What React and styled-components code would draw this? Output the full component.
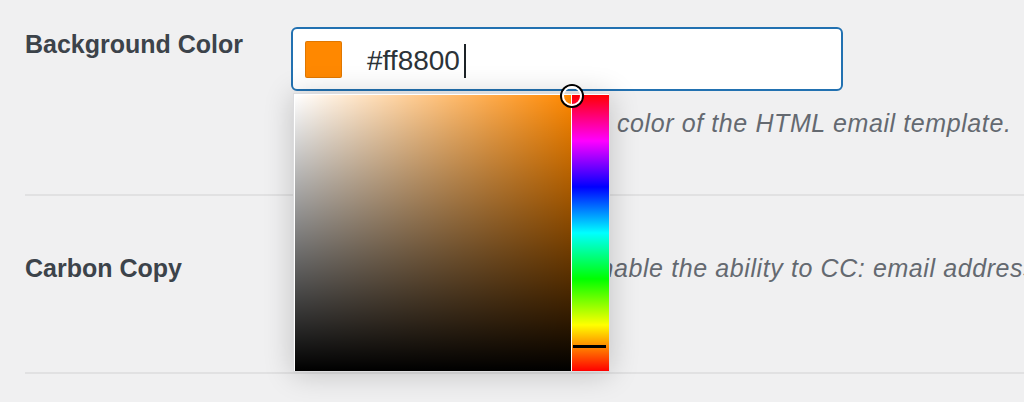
import React from 'react';
import styled, { createGlobalStyle } from 'styled-components';

const GlobalStyle = createGlobalStyle`
  body {
    margin: 0;
    background: #f0f0f1;
    font-family: "Liberation Sans", Arial, sans-serif;
    overflow: hidden;
  }
`;

const Page = styled.div`
  width: 1024px;
  height: 402px;
  padding-left: 25px;
  box-sizing: border-box;
  overflow: hidden;
`;

const Row = styled.div`
  display: flex;
  align-items: ${p => p.inline ? 'baseline' : 'flex-start'};
  height: ${p => p.h}px;
  padding-top: ${p => p.pt}px;
  box-sizing: border-box;
  border-bottom: 2px solid #e1e1e2;
`;

const Label = styled.div`
  width: 266px;
  flex-shrink: 0;
  margin-top: ${p => p.mt || 0}px;
  font-size: 25px;
  line-height: 30px;
  font-weight: 700;
  color: #3c434a;
`;

const Field = styled.div`
  position: relative;
  flex: 1;
  min-width: 0;
  white-space: nowrap;
`;

const ColorInput = styled.div`
  display: flex;
  align-items: center;
  width: 552px;
  height: 64px;
  padding-left: 12px;
  box-sizing: border-box;
  border: 2px solid #2271b1;
  border-radius: 6px;
  background: #fff;
`;

const Swatch = styled.span`
  width: 37px;
  height: 37px;
  box-sizing: border-box;
  border: 1px solid rgba(0, 0, 0, 0.12);
  border-radius: 2px;
  background: ${p => p.color};
`;

const Value = styled.span`
  margin-left: 25px;
  padding-top: 4px;
  font-size: 28px;
  line-height: 32px;
  color: #2c3338;
`;

const Caret = styled.span`
  display: inline-block;
  width: 2px;
  height: 34px;
  margin-left: 4px;
  vertical-align: -8px;
  background: #1d2327;
`;

const Description = styled.p`
  margin: ${p => p.mt || 0}px 0 0;
  padding-left: 4px;
  font-size: 25px;
  line-height: 30px;
  font-style: italic;
  letter-spacing: 0.6px;
  white-space: nowrap;
  color: #646970;
`;

const Picker = styled.div`
  position: absolute;
  top: 66px;
  left: 2px;
  z-index: 10;
  display: flex;
  gap: 1px;
  padding: 1px 0 0 1px;
  border: 1px solid #dcdcde;
  background: #fff;
  box-shadow: 0 2px 28px rgba(0, 0, 0, 0.2);
`;

const Square = styled.div`
  width: 276px;
  height: 276px;
  background:
    linear-gradient(to top, #000, rgba(0, 0, 0, 0)),
    linear-gradient(to right, #fff, rgba(255, 255, 255, 0)),
    ${p => p.hue};
`;

const Hue = styled.div`
  position: relative;
  width: 37px;
  height: 276px;
  background: linear-gradient(
    to bottom,
    #f00 0%,
    #f0f 16.67%,
    #00f 33.33%,
    #0ff 50%,
    #0f0 66.67%,
    #ff0 83.33%,
    #f00 100%
  );
`;

const HueHandle = styled.span`
  position: absolute;
  left: 1px;
  width: 33px;
  height: 3px;
  background: #000;
`;

const Marker = styled.span`
  position: absolute;
  left: 268px;
  top: -8px;
  width: 20px;
  height: 20px;
  box-sizing: border-box;
  border: 2.5px solid #fff;
  border-radius: 50%;
  box-shadow: 0 0 0 2px #000;
`;

export default function App() {
  const color = '#ff8800';
  const hueOffset = 276 - Math.round((32 / 360) * 276) - 1;

  return (
    <Page>
      <GlobalStyle />
      <Row h={196} pt={27}>
        <Label mt={2}>Background Color</Label>
        <Field>
          <ColorInput>
            <Swatch color={color} />
            <Value>
              {color}
              <Caret />
            </Value>
          </ColorInput>
          <Description mt={17}>
            Set the default background color of the HTML email template.
          </Description>
          <Picker>
            <Square hue={color} />
            <Hue>
              <HueHandle style={{ top: hueOffset }} />
            </Hue>
            <Marker />
          </Picker>
        </Field>
      </Row>
      <Row h={178} pt={57} inline>
        <Label>Carbon Copy</Label>
        <Description>
          Click this box in order to enable the ability to CC: email addresses on outgoing mail.
        </Description>
      </Row>
    </Page>
  );
}
